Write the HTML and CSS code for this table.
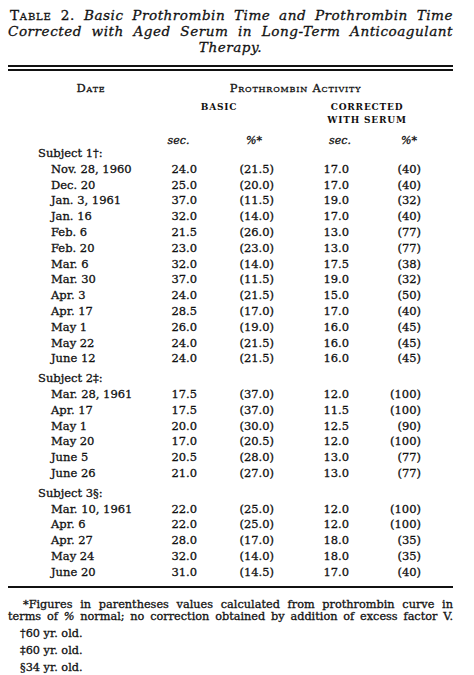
FILE: index.html
```html
<!DOCTYPE html>
<html lang="en">
<head>
<meta charset="utf-8">
<title>Table 2</title>
<link rel="stylesheet" href="styles.css">
</head>
<body>
<div class="page">
  <div class="title">
    <span class="tline"><span class="tlabel">Table 2.</span> <i>Basic Prothrombin Time and Prothrombin Time</i></span>
    <span class="tline"><i>Corrected with Aged Serum in Long-Term Anticoagulant</i></span>
    <span class="tline tlast"><i>Therapy.</i></span>
  </div>
  <div class="rule-double"></div>

  <div class="head1">
    <span class="h-date">Date</span>
    <span class="h-pa">Prothrombin Activity</span>
  </div>
  <div class="head2">
    <span class="h-blank"></span>
    <span class="h-basic">basic</span>
    <span class="h-corr">corrected<br>with serum</span>
  </div>
  <div class="head3">
    <span class="h-blank"></span>
    <span class="u1">sec.</span>
    <span class="u2">%*</span>
    <span class="u3">sec.</span>
    <span class="u4">%*</span>
  </div>

  <div class="group">
    <div class="subject">Subject 1†:</div>
    <div class="row"><span class="date">Nov. 28, 1960</span><span>24.0</span><span>(21.5)</span><span>17.0</span><span>(40)</span></div>
    <div class="row"><span class="date">Dec. 20</span><span>25.0</span><span>(20.0)</span><span>17.0</span><span>(40)</span></div>
    <div class="row"><span class="date">Jan. 3, 1961</span><span>37.0</span><span>(11.5)</span><span>19.0</span><span>(32)</span></div>
    <div class="row"><span class="date">Jan. 16</span><span>32.0</span><span>(14.0)</span><span>17.0</span><span>(40)</span></div>
    <div class="row"><span class="date">Feb. 6</span><span>21.5</span><span>(26.0)</span><span>13.0</span><span>(77)</span></div>
    <div class="row"><span class="date">Feb. 20</span><span>23.0</span><span>(23.0)</span><span>13.0</span><span>(77)</span></div>
    <div class="row"><span class="date">Mar. 6</span><span>32.0</span><span>(14.0)</span><span>17.5</span><span>(38)</span></div>
    <div class="row"><span class="date">Mar. 30</span><span>37.0</span><span>(11.5)</span><span>19.0</span><span>(32)</span></div>
    <div class="row"><span class="date">Apr. 3</span><span>24.0</span><span>(21.5)</span><span>15.0</span><span>(50)</span></div>
    <div class="row"><span class="date">Apr. 17</span><span>28.5</span><span>(17.0)</span><span>17.0</span><span>(40)</span></div>
    <div class="row"><span class="date">May 1</span><span>26.0</span><span>(19.0)</span><span>16.0</span><span>(45)</span></div>
    <div class="row"><span class="date">May 22</span><span>24.0</span><span>(21.5)</span><span>16.0</span><span>(45)</span></div>
    <div class="row"><span class="date">June 12</span><span>24.0</span><span>(21.5)</span><span>16.0</span><span>(45)</span></div>
  </div>

  <div class="group gap">
    <div class="subject">Subject 2‡:</div>
    <div class="row"><span class="date">Mar. 28, 1961</span><span>17.5</span><span>(37.0)</span><span>12.0</span><span>(100)</span></div>
    <div class="row"><span class="date">Apr. 17</span><span>17.5</span><span>(37.0)</span><span>11.5</span><span>(100)</span></div>
    <div class="row"><span class="date">May 1</span><span>20.0</span><span>(30.0)</span><span>12.5</span><span>(90)</span></div>
    <div class="row"><span class="date">May 20</span><span>17.0</span><span>(20.5)</span><span>12.0</span><span>(100)</span></div>
    <div class="row"><span class="date">June 5</span><span>20.5</span><span>(28.0)</span><span>13.0</span><span>(77)</span></div>
    <div class="row"><span class="date">June 26</span><span>21.0</span><span>(27.0)</span><span>13.0</span><span>(77)</span></div>
  </div>

  <div class="group gap">
    <div class="subject">Subject 3§:</div>
    <div class="row"><span class="date">Mar. 10, 1961</span><span>22.0</span><span>(25.0)</span><span>12.0</span><span>(100)</span></div>
    <div class="row"><span class="date">Apr. 6</span><span>22.0</span><span>(25.0)</span><span>12.0</span><span>(100)</span></div>
    <div class="row"><span class="date">Apr. 27</span><span>28.0</span><span>(17.0)</span><span>18.0</span><span>(35)</span></div>
    <div class="row"><span class="date">May 24</span><span>32.0</span><span>(14.0)</span><span>18.0</span><span>(35)</span></div>
    <div class="row"><span class="date">June 20</span><span>31.0</span><span>(14.5)</span><span>17.0</span><span>(40)</span></div>
  </div>

  <div class="rule"></div>

  <div class="notes">
    <span class="nline nfirst">*Figures in parentheses values calculated from prothrombin curve in</span>
    <span class="nline">terms of <i>%</i> normal; no correction obtained by addition of excess factor V.</span>
    <div class="fn">†60 yr. old.</div>
    <div class="fn">‡60 yr. old.</div>
    <div class="fn">§34 yr. old.</div>
  </div>
</div>
</body>
</html>
```

FILE: styles.css
```css
html, body {
  margin: 0;
  padding: 0;
  background: #ffffff;
}

body {
  font-family: "DejaVu Serif", "Liberation Serif", serif;
  color: #111111;
  -webkit-text-stroke: 0.3px #111111;
}

.page {
  width: 445px;
  padding: 7px 21px 0 8px;
}

/* Title */
.title {
  font-size: 13.6px;
  line-height: 16px;
}
.tline {
  display: block;
  text-align: justify;
  text-align-last: justify;
  letter-spacing: 0.5px;
  white-space: nowrap;
}
.tline i {
  font-style: italic;
}
.tlabel {
  font-variant: small-caps;
  padding-left: 2px;
  letter-spacing: 0.8px;
}
.tlast {
  text-align: center;
  text-align-last: center;
}

.rule-double {
  margin-top: 10px;
  height: 2px;
  border-top: 2px solid #111111;
  border-bottom: 2px solid #111111;
}

/* Header */
.head1 {
  display: flex;
  margin-top: 9px;
  font-size: 11.5px;
  line-height: 16px;
  font-variant: small-caps;
  letter-spacing: 0.8px;
}
.h-date {
  width: 166px;
  text-align: center;
}
.h-pa {
  width: 243px;
  text-align: center;
}

.head2 {
  display: flex;
  margin-top: 5px;
  font-size: 9px;
  line-height: 13px;
  font-weight: bold;
  text-transform: uppercase;
  letter-spacing: 0.8px;
  -webkit-text-stroke: 0;
}
.h-blank {
  width: 142px;
  flex: none;
}
.h-basic {
  width: 138px;
  text-align: center;
}
.h-corr {
  width: 158px;
  text-align: center;
}

.head3 {
  display: flex;
  margin-top: 9px;
  font-size: 11px;
  line-height: 10px;
  font-style: italic;
}
.u1 { width: 57px; text-align: center; }
.u2 { width: 94px; text-align: center; }
.u3 { width: 78px; text-align: center; }
.u4 { width: 60px; text-align: center; }

/* Body rows */
.group {
  font-size: 11.5px;
  line-height: 15.8px;
}
.group.gap {
  margin-top: 4px;
}
.subject {
  padding-left: 30px;
}
.row {
  display: grid;
  grid-template-columns: 142px 47px 77px 75px 72px;
}
.row span {
  text-align: right;
  white-space: nowrap;
}
.row .date {
  text-align: left;
  padding-left: 43px;
}

.rule {
  margin-top: 5px;
  height: 2px;
  background: #111111;
}

/* Notes */
.notes {
  margin-top: 11px;
  font-size: 11.3px;
}
.nline {
  display: block;
  line-height: 12px;
  text-align: justify;
  text-align-last: justify;
  white-space: nowrap;
}
.nfirst {
  padding-left: 15px;
}
.fn {
  line-height: 17px;
  padding-left: 12px;
}
.nline + .fn {
  margin-top: 2px;
}
```
